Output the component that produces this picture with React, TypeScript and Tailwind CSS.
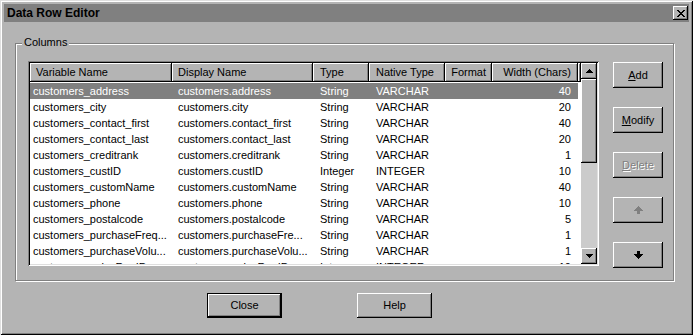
import React from "react";

const raised =
  "shadow-[inset_-1px_-1px_0_#000,inset_1px_1px_0_#fff,inset_-2px_-2px_0_#808080]";

type Row = [string, string, string, string, string];

const rows: Row[] = [
  ["customers_address", "customers.address", "String", "VARCHAR", "40"],
  ["customers_city", "customers.city", "String", "VARCHAR", "20"],
  ["customers_contact_first", "customers.contact_first", "String", "VARCHAR", "40"],
  ["customers_contact_last", "customers.contact_last", "String", "VARCHAR", "20"],
  ["customers_creditrank", "customers.creditrank", "String", "VARCHAR", "1"],
  ["customers_custID", "customers.custID", "Integer", "INTEGER", "10"],
  ["customers_customName", "customers.customName", "String", "VARCHAR", "40"],
  ["customers_phone", "customers.phone", "String", "VARCHAR", "10"],
  ["customers_postalcode", "customers.postalcode", "String", "VARCHAR", "5"],
  ["customers_purchaseFreq...", "customers.purchaseFre...", "String", "VARCHAR", "1"],
  ["customers_purchaseVolu...", "customers.purchaseVolu...", "String", "VARCHAR", "1"],
  ["customers_salesRepID", "customers.salesRepID", "Integer", "INTEGER", "10"],
];

function CloseX() {
  return (
    <svg width="8" height="7" viewBox="0 0 8 7" shapeRendering="crispEdges">
      <path
        fill="#000"
        d="M0 0h2v1h-2z M6 0h2v1h-2z M1 1h2v1h-2z M5 1h2v1h-2z M2 2h4v1h-4z M3 3h2v1h-2z M2 4h4v1h-4z M1 5h2v1h-2z M5 5h2v1h-2z M0 6h2v1h-2z M6 6h2v1h-2z"
      />
    </svg>
  );
}

function SmallTri({ down }: { down?: boolean }) {
  return (
    <svg width="7" height="4" viewBox="0 0 7 4" shapeRendering="crispEdges">
      <path
        fill="#000"
        d={
          down
            ? "M0 0h7v1h-7z M1 1h5v1h-5z M2 2h3v1h-3z M3 3h1v1h-1z"
            : "M3 0h1v1h-1z M2 1h3v1h-3z M1 2h5v1h-5z M0 3h7v1h-7z"
        }
      />
    </svg>
  );
}

function BigArrow({ down, color }: { down?: boolean; color: string }) {
  return (
    <svg width="9" height="8" viewBox="0 0 9 8" shapeRendering="crispEdges">
      <path
        fill={color}
        d={
          down
            ? "M3 0h3v3h-3z M0 3h9v1h-9z M1 4h7v1h-7z M2 5h5v1h-5z M3 6h3v1h-3z M4 7h1v1h-1z"
            : "M4 0h1v1h-1z M3 1h3v1h-3z M2 2h5v1h-5z M1 3h7v1h-7z M0 4h9v1h-9z M3 5h3v3h-3z"
        }
      />
    </svg>
  );
}

function SideButton({ children, className = "" }: { children: React.ReactNode; className?: string }) {
  return (
    <div
      className={`w-[50px] h-[26px] flex items-center justify-center bg-[#b4b4b4] ${raised} ${className}`}
    >
      {children}
    </div>
  );
}

const cols = [
  { w: "w-[142px]", head: "Variable Name", hAlign: "justify-start pl-[6px]", cAlign: "text-left pl-[3px]" },
  { w: "w-[141px]", head: "Display Name", hAlign: "justify-start pl-[6px]", cAlign: "text-left pl-[6px]" },
  { w: "w-[56px]", head: "Type", hAlign: "justify-start pl-[7px]", cAlign: "text-left pl-[7px]" },
  { w: "w-[76px]", head: "Native Type", hAlign: "justify-start pl-[7px]", cAlign: "text-left pl-[7px]" },
  { w: "w-[47px]", head: "Format", hAlign: "justify-end pr-[6px]", cAlign: "text-left pl-[7px]" },
  { w: "w-[86px]", head: "Width (Chars)", hAlign: "justify-end pr-[7px]", cAlign: "text-right pr-[7px]" },
];

export default function App() {
  return (
    <div
      className="w-[693px] h-[335px] bg-[#b4b4b4] p-[4px] flex flex-col text-[11px] text-black shadow-[inset_1px_1px_0_#dfdfdf,inset_-1px_-1px_0_#000,inset_2px_2px_0_#fff,inset_-2px_-2px_0_#808080] overflow-hidden"
      style={{ fontFamily: '"Liberation Sans", Arial, sans-serif' }}
    >
      {/* Title bar */}
      <div className="h-[18px] bg-[#808080] flex items-center pl-[3px] pr-[1px]">
        <div className="flex-1 font-bold text-[12px] leading-none">Data Row Editor</div>
        <div className={`w-[15px] h-[14px] bg-[#b4b4b4] flex items-center justify-center ${raised}`}>
          <CloseX />
        </div>
      </div>

      {/* Group box */}
      <div className="relative mt-[21px] ml-[11px] w-[659px] h-[238px] border border-[#808080] shadow-[1px_1px_0_#fff,inset_1px_1px_0_#fff] pl-[12px] pt-[17px] flex">
        <div className="absolute left-[6px] top-[-8px] px-[2px] bg-[#b4b4b4] leading-[13px]">Columns</div>

        {/* List */}
        <div className="w-[571px] h-[205px] p-[2px] bg-white shadow-[inset_1px_1px_0_#808080,inset_-1px_-1px_0_#fff,inset_2px_2px_0_#000,inset_-2px_-2px_0_#dfdfdf] flex">
          <div className="w-[551px] h-full flex flex-col overflow-hidden bg-white">
            <div className="h-[19px] flex shrink-0">
              {cols.map((c) => (
                <div
                  key={c.head}
                  className={`${c.w} h-full flex items-center ${c.hAlign} bg-[#b4b4b4] ${raised} whitespace-nowrap`}
                >
                  {c.head}
                </div>
              ))}
              <div className={`w-[3px] h-full bg-[#b4b4b4] ${raised}`} />
            </div>
            <div className="mt-[1px] flex flex-col">
              {rows.map((r, i) => (
                <div
                  key={i}
                  className={`h-[16px] shrink-0 flex items-center leading-[16px] w-[548px] ${
                    i === 0 ? "bg-[#808080] text-white" : ""
                  }`}
                >
                  {cols.map((c, j) => (
                    <div key={j} className={`${c.w} ${c.cAlign} whitespace-nowrap overflow-hidden`}>
                      {j === 4 ? "" : j === 5 ? r[4] : r[j]}
                    </div>
                  ))}
                </div>
              ))}
            </div>
          </div>

          {/* Scrollbar */}
          <div className="w-[16px] h-full flex flex-col bg-[#cbcbcb]">
            <div className={`h-[16px] shrink-0 flex items-center justify-center bg-[#b4b4b4] ${raised}`}>
              <SmallTri />
            </div>
            <div className={`h-[84px] shrink-0 bg-[#b4b4b4] ${raised}`} />
            <div className="flex-1" />
            <div className={`h-[16px] shrink-0 flex items-center justify-center bg-[#b4b4b4] ${raised}`}>
              <SmallTri down />
            </div>
          </div>
        </div>

        {/* Side buttons */}
        <div className="ml-[14px] pt-[1px] flex flex-col gap-[19px]">
          <SideButton>
            <span>
              <span className="underline underline-offset-1">A</span>dd
            </span>
          </SideButton>
          <SideButton>
            <span>
              <span className="underline underline-offset-1">M</span>odify
            </span>
          </SideButton>
          <SideButton>
            <span className="text-[#808080] [text-shadow:1px_1px_0_#fff]">
              <span className="underline underline-offset-1">D</span>elete
            </span>
          </SideButton>
          <SideButton>
            <BigArrow color="#808080" />
          </SideButton>
          <SideButton>
            <BigArrow down color="#000" />
          </SideButton>
        </div>
      </div>

      {/* Bottom buttons */}
      <div className="mt-[12px] ml-[203px] flex gap-[75px]">
        <div className="w-[75px] h-[25px] border border-black">
          <div className={`w-full h-full flex items-center justify-center bg-[#b4b4b4] ${raised}`}>Close</div>
        </div>
        <div className={`w-[75px] h-[25px] flex items-center justify-center bg-[#b4b4b4] ${raised}`}>Help</div>
      </div>
    </div>
  );
}
